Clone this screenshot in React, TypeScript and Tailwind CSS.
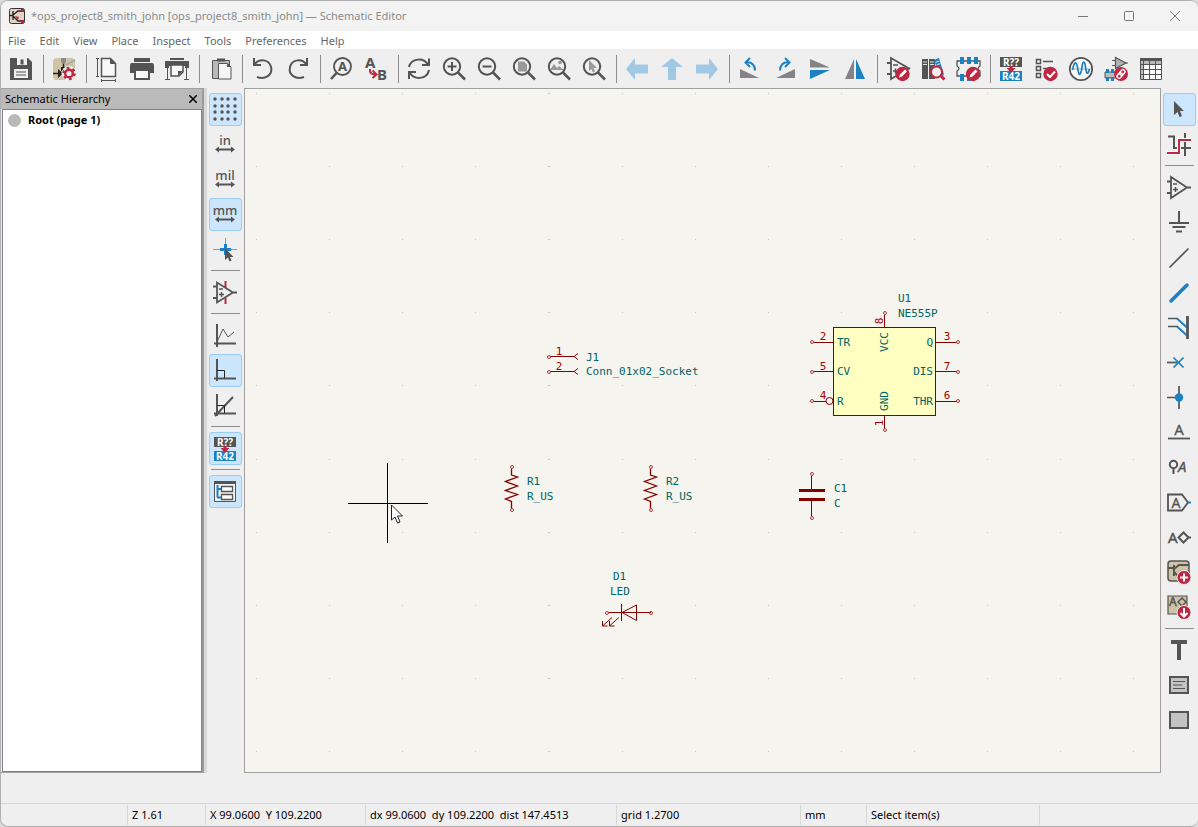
import React from 'react';
import clsx from 'clsx';

const INK = '#545454';
const BLUE = '#1a81c4';
const RED = '#bf2641';

type Item = { id: string; label: string; active?: boolean } | '|';

const UnitIcon = ({ unit }: { unit: string }) => (
  <>
    <text x="12" y="13" textAnchor="middle" fontSize="13" fontWeight="500" fill={INK}>{unit}</text>
    <path d="M4 17.5h16" stroke={INK} strokeWidth="2" />
    <path d="M6 14.5v6l-4-3zM18 14.5v6l4-3z" fill={INK} />
  </>
);

const icons: Record<string, React.ReactNode> = {
  save: (
    <>
      <path d="M1 2h18l4 4v18H1z" fill={INK} />
      <path d="M8 2h10v7H8z" fill="#efefef" />
      <path d="M11.5 3.5h3v5h-3z" fill={INK} />
      <path d="M5 13h14v9H5z" fill="#efefef" />
      <path d="M7 16h10M7 19h10" stroke={INK} />
    </>
  ),
  setup: (
    <>
      <rect x="1" y="2" width="22" height="22" rx="4" fill="#cfc3a6" />
      <path d="M11.5 5v8M1 17.5h8" stroke="#222" strokeWidth="1.5" fill="none" />
      <path d="M9 2h5v4l-2.5 2L9 6z" fill="#8b8b8b" />
      <path d="M14 9l9-5" stroke="#a9a9a9" strokeWidth="2" />
      <path d="M9 11h5v4H9zM6 13l5 4.5L6 22z" fill="#222" />
      <circle cx="17" cy="17.5" r="7.5" fill="#efefef" />
      <circle cx="17" cy="17.5" r="5.6" fill="none" stroke={RED} strokeWidth="2.4" strokeDasharray="2.6 3.26" />
      <circle cx="17" cy="17.5" r="3.8" fill="none" stroke={RED} strokeWidth="2.4" />
    </>
  ),
  page: (
    <g fill="none" stroke={INK}>
      <path d="M2.5 2v18M1 2.5h3M1 20.5h3M6 24.5h15M6.5 23v3M20.5 23v3" />
      <path d="M6.5 2.5h9l5 5v13h-14z" fill="#f8f8f8" strokeWidth="1.5" />
      <path d="M15.5 2.5v5h5z" fill={INK} />
    </g>
  ),
  print: (
    <>
      <path d="M4 2h16v4H4zM2 7h20q2 0 2 2v8h-4v-4H4v4H0V9q0-2 2-2z" fill={INK} />
      <path d="M5 14h14v9H5z" fill="#f8f8f8" stroke={INK} strokeWidth="2" />
    </>
  ),
  plot: (
    <>
      <path d="M5 2h14v2H5zM0 5h24v7h-4v-2H4v2H0z" fill={INK} />
      <path d="M2.5 11v12M21.5 11v12M0 23.5h5M19 23.5h5" stroke={INK} fill="none" />
      <path d="M6 9h12v7l-4 4H6z" fill="#f8f8f8" stroke={INK} strokeWidth="1.5" />
      <path d="M18 15h-5v5z" fill={INK} />
    </>
  ),
  paste: (
    <>
      <path d="M4.500 4.500h17v18h-17z" fill="#b9b9b9" stroke={INK} />
      <path d="M9 2.500h8v3H9z" fill={INK} />
      <path d="M10.500 7.500h9l3.500 3.500v12H10.500z" fill="#f5f5f5" stroke={INK} />
      <path d="M19 7.500V11h4z" fill={INK} />
    </>
  ),
  undo: (
    <g fill="none" stroke={INK} strokeWidth="2">
      <path d="M3 9C8 2 18 3 20 11S14 24 6 21" />
      <path d="M3 2v7h7" />
    </g>
  ),
  redo: (
    <g fill="none" stroke={INK} strokeWidth="2">
      <path d="M21 9C16 2 6 3 4 11s6 13 14 10" />
      <path d="M21 2v7h-7" />
    </g>
  ),
  find: (
    <>
      <circle cx="13.5" cy="10.5" r="8.5" fill="none" stroke={INK} strokeWidth="1.8" />
      <path d="M8 16.5L2 23" stroke={INK} strokeWidth="2.5" />
      <text x="13.5" y="15" textAnchor="middle" fontSize="13" fontWeight="700" fill={INK}>A</text>
    </>
  ),
  replace: (
    <>
      <text x="1" y="12" fontSize="15" fontWeight="700" fill={INK}>A</text>
      <text x="13" y="24" fontSize="15" fontWeight="700" fill={INK}>B</text>
      <path d="M6 13v2q0 3 5 3.500M8.500 14.500l4 4-4 3.500" fill="none" stroke={RED} strokeWidth="2" />
    </>
  ),
  refresh: (
    <g fill="none" stroke={INK} strokeWidth="2">
      <path d="M2 11C4 2 17 1 21 9M22 2.5V9h-7" />
      <path d="M22 14c-2 10-15 10-19 3M2 23v-7h7" />
    </g>
  ),
  zoomin: (
    <g fill="none" stroke={INK} strokeWidth="2">
      <circle cx="10" cy="10.5" r="8.2" />
      <path d="M16 16.5l7 7" strokeWidth="2.5" />
      <path d="M5.5 10.5h9M10 6v9" />
    </g>
  ),
  zoomout: (
    <g fill="none" stroke={INK} strokeWidth="2">
      <circle cx="10" cy="10.5" r="8.2" />
      <path d="M16 16.5l7 7" strokeWidth="2.5" />
      <path d="M5.5 10.5h9" />
    </g>
  ),
  zoomfit: (
    <>
      <path d="M6 5.5h6l3 3v7H6z" fill="#999" />
      <circle cx="10" cy="10.5" r="8.2" fill="none" stroke={INK} strokeWidth="2" />
      <path d="M16 16.5l7 7" stroke={INK} strokeWidth="2.5" />
    </>
  ),
  zoomobjects: (
    <>
      <path d="M3 14l4-6 3 4 2-2 5 4z" fill="#999" />
      <circle cx="13" cy="6.5" r="1.8" fill="#999" />
      <circle cx="10" cy="10.5" r="8.2" fill="none" stroke={INK} strokeWidth="2" />
      <path d="M16 16.5l7 7" stroke={INK} strokeWidth="2.5" />
    </>
  ),
  zoomselect: (
    <>
      <path d="M7 4v11l2.500-2 1.500 3.500 2-1-1.500-3.500H15z" fill="#999" />
      <circle cx="10" cy="10.5" r="8.2" fill="none" stroke={INK} strokeWidth="2" />
      <path d="M16 16.5l7 7" stroke={INK} strokeWidth="2.5" />
    </>
  ),
  left: <path d="M1 13L10 2v6.500h13v9H10V24z" fill="#a1c9e6" />,
  up: <path d="M12 2l11 9h-7v13H8V11H1z" fill="#a1c9e6" />,
  right: <path d="M23 13L14 2v6.500H1v9h13V24z" fill="#a1c9e6" />,
  ccw: (
    <>
      <path d="M2 13v9h19z" fill="#868387" />
      <path d="M8 6.5c6-1 9 3 9 8M12 2L7.500 6.500 12 11" fill="none" stroke={BLUE} strokeWidth="2" />
    </>
  ),
  cw: (
    <>
      <path d="M22 13v9H3z" fill="#868387" />
      <path d="M16 6.5c-6-1-9 3-9 8M12 2l4.500 4.500L12 11" fill="none" stroke={BLUE} strokeWidth="2" />
    </>
  ),
  mirrorv: (
    <>
      <path d="M2 3l20 8.500H2z" fill="#868387" />
      <path d="M2 23l20-9H2z" fill={BLUE} />
    </>
  ),
  mirrorh: (
    <>
      <path d="M11 3v20H2z" fill="#868387" />
      <path d="M13 3v20h9z" fill={BLUE} />
    </>
  ),
  symedit: (
    <>
      <path d="M5 2v21l18-10.500zM1 7h4M1 18h4M21 12.500h3" fill="none" stroke={INK} strokeWidth="1.8" />
      <path d="M7 9h5M7 15h5M9.500 12.500v5" stroke={INK} strokeWidth="1.5" />
      <circle cx="16.5" cy="18" r="7.2" fill={RED} />
      <path d="M13 21.500l1-3 5-5 2 2-5 5z" fill="#fff" />
    </>
  ),
  symbrowse: (
    <>
      <path d="M1 3h6v20H1zM8 3h6v20H8z" fill={INK} />
      <path d="M2 6h4M2 8.500h4M9 6h4M9 8.500h4" stroke="#ddd" />
      <path d="M13 4l5-2 5 17-4 2z" fill={BLUE} />
      <path d="M14.500 6.500l4-1.500M15.500 9l4-1.500" stroke="#ddd" />
      <circle cx="15.5" cy="16" r="5.5" fill="#efefef" stroke={RED} strokeWidth="2" />
      <path d="M19.500 19.500l4 4" stroke={RED} strokeWidth="3" />
    </>
  ),
  fpedit: (
    <>
      <path d="M1 5h23v5q-4 2.500 0 5v5H1v-5q4-2.500 0-5z" fill="none" stroke={INK} strokeWidth="1.3" />
      <path d="M4 1h4v7H4zM11 1h4v7h-4zM18 1h4v7h-4zM4 18h4v7H4zM11 18h4v7h-4z" fill={BLUE} />
      <circle cx="17" cy="18" r="7.2" fill={RED} />
      <path d="M13.500 21.500l1-3 5-5 2 2-5 5z" fill="#fff" />
    </>
  ),
  annotate: (
    <>
      <path d="M1 1h22v10H1z" fill={INK} />
      <path d="M1 15h22v10H1z" fill={BLUE} />
      <text x="12" y="9.5" textAnchor="middle" fontSize="10" fontWeight="700" fill="#fff">R??</text>
      <text x="12" y="23.5" textAnchor="middle" fontSize="10" fontWeight="700" fill="#fff">R42</text>
      <path d="M10.500 10h3v2h3L12 17l-4.500-5h3z" fill={RED} />
    </>
  ),
  erc: (
    <>
      <path d="M2.500 3.500h4v4h-4zM2.500 10.500h4v4h-4zM2.500 17.500h4v4h-4zM9 5.500h10M9 12.500h7" fill="none" stroke={INK} strokeWidth="1.5" />
      <circle cx="16.5" cy="18" r="7.2" fill={RED} />
      <path d="M13 18l3 3 5-5.500" fill="none" stroke="#fff" strokeWidth="2" />
    </>
  ),
  sim: (
    <>
      <circle cx="12" cy="13" r="11.2" fill="#fafafa" stroke={INK} strokeWidth="1.7" />
      <path d="M2 13h20" stroke="#aaa" />
      <path d="M3.500 14C6 2 8 7 9 14s3 5 4-3 3-5 3.500 0 2 10 4 2" fill="none" stroke={BLUE} strokeWidth="1.7" />
    </>
  ),
  assign: (
    <>
      <path d="M11.500 1.500v11L22 7z" fill="#adb3bb" stroke={INK} strokeWidth="1.2" />
      <path d="M8 4.500h3M8 9.500h3M21 7h3" stroke={INK} />
      <path d="M1 16h12v6H1z" fill="#bbb" stroke={INK} />
      <path d="M2 13h3v4H2zM7 13h3v4H7zM2 21h3v4H2zM7 21h3v4H7z" fill={BLUE} />
      <circle cx="17" cy="18" r="7" fill={RED} />
      <g fill="none" stroke="#fff" strokeWidth="1.4" transform="rotate(-50 17 18)">
        <rect x="12" y="16" width="6" height="4" rx="2" />
        <rect x="16" y="16" width="6" height="4" rx="2" />
      </g>
    </>
  ),
  table: (
    <>
      <path d="M1 2.500h22v21H1z" fill="#fff" />
      <path d="M1 4h22v4.500H1zM1 8h3v15H1z" fill="#bbb" />
      <path d="M1 2h22v3H1z" fill={INK} />
      <path d="M1.500 2.500h21v21h-21zM1 8.500h22M1 13.500h22M1 18.500h22M4.500 5v18M10.500 5v18M16.500 5v18" fill="none" stroke={INK} />
    </>
  ),
  grid: (
    <g fill={INK}>
      {[2, 9, 15, 22].map((y) => [2, 9, 15, 22].map((x) => <circle key={`${x}-${y}`} cx={x} cy={y} r="1.7" />))}
    </g>
  ),
  inch: <UnitIcon unit="in" />,
  mil: <UnitIcon unit="mil" />,
  mm: <UnitIcon unit="mm" />,
  cross: (
    <>
      <path d="M0 12.500h24M12.500 1v21" stroke="#999" />
      <path d="M12.500 7v11M7 12.500h11" stroke={BLUE} strokeWidth="3" />
      <path d="M12 11v12l3-2.500 1.500 4 2-1-1.500-3.500h3.500z" fill={INK} />
    </>
  ),
  hidden: (
    <>
      <path d="M12.500 1v7M12.500 18v6" stroke={RED} strokeWidth="2" />
      <path d="M4 2.500v20L20 12.500zM0 6.500h4M0 18h4M20 12.500h4" fill="none" stroke={INK} strokeWidth="1.8" />
      <path d="M6 9h4M6 14.500h5M8.500 12v5" stroke={INK} strokeWidth="1.5" />
    </>
  ),
  free: (
    <>
      <path d="M4 1v23M1 20.500h22" stroke={INK} strokeWidth="2" />
      <path d="M4 19l6-13 5 8 6-5" fill="none" stroke={INK} />
    </>
  ),
  ortho: (
    <>
      <path d="M4 1v22M1 20.500h22" stroke={INK} strokeWidth="2" />
      <path d="M4 12.500h7.500V20" fill="none" stroke="#222" />
    </>
  ),
  deg45: (
    <>
      <path d="M4 1v22M1 20.500h22M2 23L20 4" stroke={INK} strokeWidth="2" />
      <path d="M4 12.500h7.500V20" fill="none" stroke="#222" />
    </>
  ),
  navigator: (
    <>
      <path d="M1.500 2.500h21v20h-21z" fill="#f3f3f3" stroke={INK} />
      <path d="M1 2h22v3H1z" fill={INK} />
      <path d="M4.500 6v12.500M4 10h4M4 18.500h4" fill="none" stroke={BLUE} strokeWidth="2" />
      <path d="M8.500 7.500h11v5h-11zM8.500 15.500h11v5h-11z" fill="#fff" stroke={INK} strokeWidth="1.3" />
    </>
  ),
  select: <path d="M7 4v14l3.500-3 2 5 2.500-1-2-5H17z" fill={INK} />,
  highlight: (
    <>
      <path d="M1 4.500h6V16h5M18 1v23M12 16h12" fill="none" stroke={INK} strokeWidth="2" />
      <path d="M0 21h12V8h12" fill="none" stroke="#fff" strokeWidth="4" />
      <path d="M0 21h12V8h12" fill="none" stroke={RED} strokeWidth="2" />
    </>
  ),
  symbol: (
    <>
      <path d="M4 2v21l16-10.500zM0 6.500h4M0 18h4M19 12.500h5" fill="none" stroke={INK} strokeWidth="1.8" />
      <path d="M6 9h4M6 14.500h5M8.500 12v5" stroke={INK} strokeWidth="1.5" />
    </>
  ),
  power: <path d="M12 1v12M2 13h20M5.500 17h13M9 21.500h6" stroke={INK} strokeWidth="2" />,
  wire: <path d="M3 22L21 4" stroke={INK} strokeWidth="1.7" strokeLinecap="round" />,
  bus: <path d="M4 21L20 5" stroke={BLUE} strokeWidth="3.5" strokeLinecap="round" />,
  entry: (
    <>
      <path d="M1 3.500h10M1 11.500h10" stroke={INK} strokeWidth="1.7" />
      <path d="M10 3.500l10 9M10 11.500l10 9" stroke={BLUE} strokeWidth="2" />
      <path d="M20.500 1v23" stroke={INK} strokeWidth="2.8" />
    </>
  ),
  noconn: (
    <>
      <path d="M0 12.500h9" stroke={INK} strokeWidth="1.7" />
      <path d="M6.500 7.500l10 10M16.500 7.500l-10 10M8 12.500h5" stroke={BLUE} strokeWidth="1.7" />
    </>
  ),
  junction: (
    <>
      <path d="M0 12.500h12M12 1v23" stroke={INK} strokeWidth="1.7" />
      <circle cx="12" cy="12.5" r="4.2" fill={BLUE} />
    </>
  ),
  label: (
    <>
      <text x="12" y="15" textAnchor="middle" fontSize="15" fill={INK} stroke={INK} strokeWidth="0.3">A</text>
      <path d="M1 18.500h22" stroke={INK} strokeWidth="1.8" />
    </>
  ),
  netclass: (
    <>
      <circle cx="6.5" cy="9.5" r="3.7" fill="none" stroke={INK} strokeWidth="2" />
      <path d="M6.500 13v6" stroke={INK} strokeWidth="2" />
      <text x="11" y="16.5" fontSize="15" fontStyle="italic" fill={INK} stroke={INK} strokeWidth="0.3">A</text>
    </>
  ),
  glabel: (
    <>
      <path d="M1 4.500h14l6 8-6 8H1z" fill="none" stroke={INK} strokeWidth="1.8" />
      <path d="M21 12.500h3" stroke={BLUE} strokeWidth="2" />
      <text x="9" y="17.5" textAnchor="middle" fontSize="14" fill={INK} stroke={INK} strokeWidth="0.3">A</text>
    </>
  ),
  hlabel: (
    <>
      <text x="1" y="18" fontSize="15" fill={INK} stroke={INK} strokeWidth="0.5">A</text>
      <path d="M11.500 12.500l5-5 5 5-5 5zM21 12.500h3" fill="none" stroke={INK} strokeWidth="2" />
    </>
  ),
  sheet: (
    <>
      <rect x="1" y="1" width="21" height="20" rx="3" fill="#cfc3a6" stroke={INK} strokeWidth="1.5" />
      <path d="M1 8h6M7 5v11M7 9l5-4h10M7 12l5 5v4" fill="none" stroke={INK} strokeWidth="2" />
      <circle cx="17" cy="17.5" r="7" fill={RED} stroke="#efefef" strokeWidth="1" />
      <path d="M17 13.500v8M13 17.500h8" stroke="#fff" strokeWidth="2" />
    </>
  ),
  sheetpin: (
    <>
      <path d="M1 1h19v18H1z" fill="#cfc3a6" stroke={INK} strokeWidth="1.2" />
      <text x="2" y="11" fontSize="12" fill={INK} stroke={INK} strokeWidth="0.5">A</text>
      <path d="M11 7l4-4 4 4-4 4z" fill="none" stroke={INK} strokeWidth="1.5" />
      <circle cx="17" cy="17.5" r="7" fill={RED} stroke="#efefef" strokeWidth="1" />
      <path d="M17 13v8M13.500 18l3.500 3.500 3.500-3.500" fill="none" stroke="#fff" strokeWidth="2" />
    </>
  ),
  text: <path d="M4 2h16v4h-6v16h-4V6H4z" fill={INK} />,
  textbox: (
    <>
      <path d="M3 4h18v16H3z" fill="#c3c3c3" stroke={INK} strokeWidth="2" />
      <path d="M6 8.500h12M6 12h9M6 15.500h12" stroke={INK} />
    </>
  ),
  rect: <path d="M3 4h18v16H3z" fill="#c3c3c3" stroke={INK} strokeWidth="2" />,
};

const topTools: Item[] = [
  { id: 'save', label: 'Save' }, '|',
  { id: 'setup', label: 'Schematic Setup' }, '|',
  { id: 'page', label: 'Page Settings' }, { id: 'print', label: 'Print' }, { id: 'plot', label: 'Plot' }, '|',
  { id: 'paste', label: 'Paste' }, '|',
  { id: 'undo', label: 'Undo' }, { id: 'redo', label: 'Redo' }, '|',
  { id: 'find', label: 'Find' }, { id: 'replace', label: 'Find and Replace' }, '|',
  { id: 'refresh', label: 'Refresh' }, { id: 'zoomin', label: 'Zoom In' }, { id: 'zoomout', label: 'Zoom Out' },
  { id: 'zoomfit', label: 'Zoom to Fit' }, { id: 'zoomobjects', label: 'Zoom to Objects' }, { id: 'zoomselect', label: 'Zoom to Selection' }, '|',
  { id: 'left', label: 'Navigate Back' }, { id: 'up', label: 'Navigate Up' }, { id: 'right', label: 'Navigate Forward' }, '|',
  { id: 'ccw', label: 'Rotate CCW' }, { id: 'cw', label: 'Rotate CW' }, { id: 'mirrorv', label: 'Mirror Vertically' }, { id: 'mirrorh', label: 'Mirror Horizontally' }, '|',
  { id: 'symedit', label: 'Symbol Editor' }, { id: 'symbrowse', label: 'Symbol Library Browser' }, { id: 'fpedit', label: 'Footprint Editor' }, '|',
  { id: 'annotate', label: 'Annotate' }, { id: 'erc', label: 'Electrical Rules Checker' }, { id: 'sim', label: 'Simulator' },
  { id: 'assign', label: 'Assign Footprints' }, { id: 'table', label: 'Symbol Fields Table' },
];

const leftTools: Item[] = [
  { id: 'grid', label: 'Show Grid', active: true }, { id: 'inch', label: 'Inches' }, { id: 'mil', label: 'Mils' },
  { id: 'mm', label: 'Millimeters', active: true }, { id: 'cross', label: 'Full-Window Crosshairs' }, '|',
  { id: 'hidden', label: 'Show Hidden Pins' }, '|',
  { id: 'free', label: 'Free Angle' }, { id: 'ortho', label: 'Right Angle', active: true }, { id: 'deg45', label: '45 Degrees' }, '|',
  { id: 'annotate', label: 'Annotate Automatically', active: true }, '|',
  { id: 'navigator', label: 'Hierarchy Navigator', active: true },
];

const rightTools: Item[] = [
  { id: 'select', label: 'Select', active: true }, { id: 'highlight', label: 'Highlight Net' }, '|',
  { id: 'symbol', label: 'Add Symbol' }, { id: 'power', label: 'Add Power' }, { id: 'wire', label: 'Add Wire' },
  { id: 'bus', label: 'Add Bus' }, { id: 'entry', label: 'Bus Entry' }, { id: 'noconn', label: 'No Connect' },
  { id: 'junction', label: 'Junction' }, { id: 'label', label: 'Net Label' }, { id: 'netclass', label: 'Net Class' },
  { id: 'glabel', label: 'Global Label' }, { id: 'hlabel', label: 'Hierarchical Label' }, { id: 'sheet', label: 'Add Sheet' },
  { id: 'sheetpin', label: 'Import Sheet Pin' }, '|',
  { id: 'text', label: 'Text' }, { id: 'textbox', label: 'Text Box' }, { id: 'rect', label: 'Rectangle' },
];

const ToolBar = ({ items, vertical = false }: { items: Item[]; vertical?: boolean }) => (
  <div className={clsx('flex shrink-0 items-center bg-[#efefef]', vertical ? 'w-[37px] flex-col pt-1' : 'h-[39px] pl-[3px]')}>
    {items.map((item, i) =>
      item === '|' ? (
        <div key={i} className={clsx('flex shrink-0 justify-center', vertical ? 'h-2 w-full items-start pt-[3px]' : 'h-full w-2 items-center')}>
          <div className={clsx('bg-[#8c8c8c]', vertical ? 'h-px w-[29px]' : 'h-7 w-px')} />
        </div>
      ) : (
        <div key={i} className="flex size-[35px] shrink-0 items-center justify-center">
          <button
            aria-label={item.label}
            className={clsx(
              'flex size-[33px] items-center justify-center rounded-[3px] border',
              item.active ? 'border-[#99cdf8] bg-[#cce6fd]' : 'border-transparent'
            )}
          >
            <svg width="25" height="25" viewBox="0 0 25 25" className="shrink-0 overflow-visible">
              {icons[item.id]}
            </svg>
          </button>
        </div>
      )
    )}
  </div>
);

const gridX = Array.from({ length: 13 }, (_, i) => Math.round(256 + i * 73.1));
const gridY = Array.from({ length: 10 }, (_, i) => Math.round(93 + i * 73.1));

const Pin = ({ x, y }: { x: number; y: number }) => (
  <circle cx={x} cy={y} r="1.5" fill="none" stroke="#a83c3c" />
);

const Resistor = ({ x, name }: { x: number; name: string }) => (
  <g transform={`translate(${x} 0)`}>
    <path d="M.5 469v6l6 2-12 4.500 12 4.500-12 4.500 12 4-12 4.500 6 2.500v7" fill="none" stroke="#840000" strokeWidth="1.3" />
    <Pin x={1} y={467} />
    <Pin x={1} y={510} />
    <text x="16" y="485">{name}</text>
    <text x="16" y="500">R_US</text>
  </g>
);

const Schematic = () => (
  <svg className="block size-full" fontFamily='"DejaVu Sans Mono", monospace' fontSize="11" fill="#006464">
    <g transform="translate(-245 -89)">
      {gridY.map((y) => gridX.map((x, i) => <rect key={`${x}-${y}`} x={i === 4 ? 548 : x} y={y} width={i === 4 ? 2 : 1} height="1" fill="#c8c8c4" />))}

      <g fill="none" stroke="#840000">
        <rect x="833.5" y="327.5" width="102" height="88" fill="#ffffc2" />
        <path d="M813 342.500h20M813 371.500h20M813 401.500h13M936 342.500h21M936 371.500h21M936 401.500h21M884.500 315v12M884.500 416v13" />
        <circle cx="829.5" cy="401" r="3.5" />
        <path d="M550 356.500h24l4-3M574 356.500l4 3M550 371.500h24l4-3M574 371.500l4 3" />
        <path d="M811.500 476v14M811.500 500v16" />
        <path d="M799 490.500h26M799 499.500h26" strokeWidth="3" />
        <path d="M608 612.500h43M621.500 604v17M636.500 605v15.500L622 612.500z" />
        <path d="M612 617.500l-9 8M602.500 621v5h5M619 617.500l-9 8M609.500 621v5h5" />
      </g>
      <Pin x={812} y={342} /><Pin x={812} y={372} /><Pin x={812} y={401} />
      <Pin x={958} y={342} /><Pin x={958} y={372} /><Pin x={958} y={401} />
      <Pin x={885} y={313} /><Pin x={885} y={430} />
      <Pin x={549} y={357} /><Pin x={549} y={372} />
      <Pin x={812} y={474} /><Pin x={812} y={518} />
      <Pin x={607} y={613} /><Pin x={651} y={613} />

      <g fill="#a90000" textAnchor="middle">
        <text x="823" y="340">2</text>
        <text x="823" y="370">5</text>
        <text x="823" y="399">4</text>
        <text x="947" y="340">3</text>
        <text x="947" y="370">7</text>
        <text x="947" y="399">6</text>
        <text transform="translate(883 321) rotate(-90)">8</text>
        <text transform="translate(883 423) rotate(-90)">1</text>
        <text x="559" y="355">1</text>
        <text x="559" y="370">2</text>
      </g>

      <text x="898" y="302">U1</text>
      <text x="898" y="317">NE555P</text>
      <text x="837" y="346">TR</text>
      <text x="837" y="375">CV</text>
      <text x="837" y="405">R</text>
      <g textAnchor="end">
        <text x="933" y="346">Q</text>
        <text x="933" y="375">DIS</text>
        <text x="933" y="405">THR</text>
      </g>
      <g textAnchor="middle">
        <text transform="translate(888 342) rotate(-90)">VCC</text>
        <text transform="translate(888 401) rotate(-90)">GND</text>
      </g>
      <text x="586" y="361">J1</text>
      <text x="586" y="375">Conn_01x02_Socket</text>
      <text x="834" y="492">C1</text>
      <text x="834" y="507">C</text>
      <text x="613" y="580">D1</text>
      <text x="610" y="595">LED</text>
      <Resistor x={511} name="R1" />
      <Resistor x={650} name="R2" />

      <path d="M387.500 463v80M348 503.500h80" stroke="#000" />
      <path d="M391.500 505v15l3.500-3 2.500 6 2.500-1-2.500-6h5z" fill="#fff" stroke="#222" />
    </g>
  </svg>
);

const menus = ['File', 'Edit', 'View', 'Place', 'Inspect', 'Tools', 'Preferences', 'Help'];

const status = [
  { text: '', width: 'w-[126px]' },
  { text: 'Z 1.61', width: 'w-[78px]' },
  { text: 'X 99.0600  Y 109.2200', width: 'w-40' },
  { text: 'dx 99.0600  dy 109.2200  dist 147.4513', width: 'w-[251px]' },
  { text: 'grid 1.2700', width: 'w-[184px]' },
  { text: 'mm', width: 'w-[66px]' },
  { text: 'Select item(s)', width: 'w-[173px]' },
  { text: '', width: 'flex-1' },
];

const App = () => {
  return (
    <div className="bg-[#dcdcdc]">
      <div className="flex h-screen flex-col overflow-hidden rounded-lg border border-r-0 border-[#b0b0b0] bg-[#efefef] font-['Noto_Sans','Open_Sans',sans-serif] text-[11px] text-black">
        <header className="flex h-[30px] shrink-0 items-center bg-[#f3f3f3] pl-2 text-[#8b8b8b]">
          <svg width="16" height="16" viewBox="0 0 16 16" className="mr-[6px] shrink-0">
            <rect x="0.5" y="0.5" width="15" height="15" rx="2" fill="#e4d3c3" stroke="#333" />
            <path d="M4 3v9M1 7.500h3M4 7l5-4h4M4 8l5 5h4" fill="none" stroke="#222" strokeWidth="1.3" />
            <path d="M12 1h3v3h-3zM12 12h3v3h-3zM6 8l4 1-1 3z" fill="#c0203c" />
          </svg>
          <h1 className="flex-1">*ops_project8_smith_john [ops_project8_smith_john] — Schematic Editor</h1>
          <button aria-label="Minimize" className="flex h-full w-[46px] items-center justify-center">
            <svg width="10" height="10"><path d="M0 5.500h10" stroke="#777" /></svg>
          </button>
          <button aria-label="Maximize" className="flex h-full w-[46px] items-center justify-center">
            <svg width="10" height="10"><rect x="0.5" y="0.5" width="9" height="9" rx="1" fill="none" stroke="#777" /></svg>
          </button>
          <button aria-label="Close" className="flex h-full w-[46px] items-center justify-center">
            <svg width="10" height="10"><path d="M0 0l10 10M10 0L0 10" stroke="#777" /></svg>
          </button>
        </header>

        <nav className="flex h-[18px] shrink-0 items-end gap-[14px] bg-white pl-[7px] text-[#666]">
          {menus.map((menu) => (
            <button key={menu}>{menu}</button>
          ))}
        </nav>

        <ToolBar items={topTools} />

        <div className="flex min-h-0 flex-1">
          <aside className="flex w-[203px] shrink-0 flex-col border-t border-r-2 border-b border-[#a0a0a0] border-r-[#9a9a9f]">
            <div className="flex h-5 shrink-0 items-center justify-between bg-[#bababa] pr-[3px] pl-1">
              <h2>Schematic Hierarchy</h2>
              <button aria-label="Close panel" className="flex size-3 items-center justify-center">
                <svg width="8" height="8"><path d="M0 0l8 8M8 0L0 8" stroke="#000" strokeWidth="1.5" /></svg>
              </button>
            </div>
            <ul className="ml-px flex-1 border border-[#7f828b] bg-white">
              <li className="flex h-5 items-center gap-[7px] pl-[5px] font-bold">
                <span className="size-[13px] rounded-full bg-[#b9b9b9]" />
                Root (page 1)
              </li>
            </ul>
          </aside>
          <div className="w-[3px] shrink-0 bg-[#d9d9d9]" />
          <ToolBar items={leftTools} vertical />
          <main className="min-w-0 flex-1 border border-[#a0a0a0] bg-[#f5f4ef]">
            <Schematic />
          </main>
          <ToolBar items={rightTools} vertical />
        </div>

        <div className="h-[30px] shrink-0" />

        <footer className="flex h-[23px] shrink-0 items-center border-t border-[#d7d7d7]">
          {status.map((cell, i) => (
            <div key={i} className={clsx('h-5 shrink-0 leading-5 whitespace-pre', cell.width, i > 0 && 'border-l border-[#d7d7d7] pl-1')}>
              {cell.text}
            </div>
          ))}
        </footer>
      </div>
    </div>
  );
};

export default App;
